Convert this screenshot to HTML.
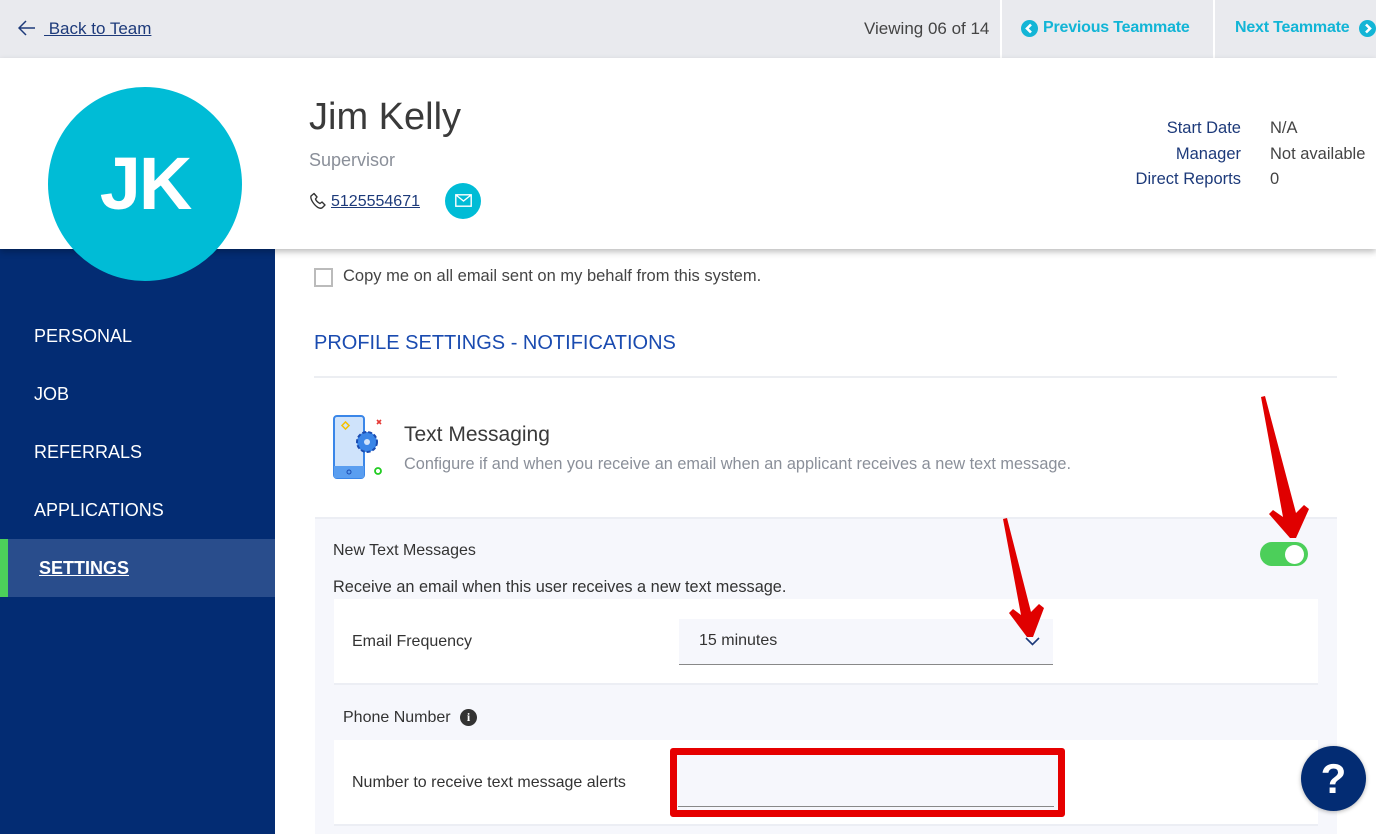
<!DOCTYPE html>
<html><head><meta charset="utf-8"><style>
*{margin:0;padding:0;box-sizing:border-box}
body{width:1376px;height:834px;overflow:hidden;position:relative;font-family:"Liberation Sans",sans-serif;background:#fff;color:#333}
.a{position:absolute;white-space:nowrap}
</style></head><body>
<div class="a" style="left:0;top:0;width:1376px;height:58px;background:#e9eaee"></div>
<div class="a" style="left:1000px;top:0;width:2px;height:58px;background:#fff"></div>
<div class="a" style="left:1213px;top:0;width:2px;height:58px;background:#fff"></div>
<svg class="a" style="left:18px;top:20px" width="18" height="16" viewBox="0 0 18 16"><path d="M8 1L1 8l7 7M1 8h16" fill="none" stroke="#1d3a7a" stroke-width="1.5"/></svg>
<div class="a" style="left:44px;top:19px;font-size:17px;color:#1d3a7a;text-decoration:underline">&nbsp;Back to Team</div>
<div class="a" style="left:864px;top:19px;font-size:17px;color:#444">Viewing 06 of 14</div>
<svg class="a" style="left:1021px;top:20px" width="17" height="17"><circle cx="8.5" cy="8.5" r="8.5" fill="#13b5d6"/><path d="M10 4.5L6 8.5l4 4" fill="none" stroke="#fff" stroke-width="2.6"/></svg>
<div class="a" style="left:1043px;top:19px;font-size:16px;color:#13b5d6;font-weight:bold;letter-spacing:-0.2px">Previous Teammate</div>
<div class="a" style="left:1235px;top:19px;font-size:16px;color:#13b5d6;font-weight:bold;letter-spacing:-0.2px">Next Teammate</div>
<svg class="a" style="left:1359px;top:20px" width="17" height="17"><circle cx="8.5" cy="8.5" r="8.5" fill="#13b5d6"/><path d="M7 4.5l4 4-4 4" fill="none" stroke="#fff" stroke-width="2.6"/></svg>
<div class="a" style="left:0;top:249px;width:275px;height:585px;background:#032c73"></div>
<div class="a" style="left:0;top:539px;width:275px;height:58px;background:#294d8c"></div>
<div class="a" style="left:0;top:539px;width:8px;height:58px;background:#4ccf5a"></div>
<div class="a" style="left:34px;top:326px;font-size:18px;color:#fff">PERSONAL</div>
<div class="a" style="left:34px;top:384px;font-size:18px;color:#fff">JOB</div>
<div class="a" style="left:34px;top:442px;font-size:18px;color:#fff">REFERRALS</div>
<div class="a" style="left:34px;top:500px;font-size:18px;color:#fff">APPLICATIONS</div>
<div class="a" style="left:39px;top:558px;font-size:18px;color:#fff;font-weight:bold;text-decoration:underline">SETTINGS</div>
<div class="a" style="left:0;top:58px;width:1376px;height:191px;background:#fff;box-shadow:0 3px 6px rgba(0,0,0,.25)"></div>
<div class="a" style="left:48px;top:87px;width:194px;height:194px;border-radius:50%;background:#00bcd6;color:#fff;font-size:74px;font-weight:bold;text-align:center;line-height:194px;letter-spacing:-2px">JK</div>
<div class="a" style="left:309px;top:96px;font-size:38px;color:#3a3a3a">Jim Kelly</div>
<div class="a" style="left:309px;top:150px;font-size:18px;color:#8a8f99">Supervisor</div>
<svg class="a" style="left:309px;top:192px" width="18" height="18" viewBox="0 0 18 18"><path d="M5 1.5L2 4c-1 3 3 9 7 11.5 2 1 3.5 1 4.5 0l2.5-2.5-3-3-2 1.5C9 10.5 7 8.5 6.5 7L8 5z" fill="none" stroke="#333" stroke-width="1.4" stroke-linejoin="round"/></svg>
<div class="a" style="left:331px;top:193px;font-size:16px;color:#1d3a7a;text-decoration:underline">5125554671</div>
<div class="a" style="left:445px;top:183px;width:36px;height:36px;border-radius:50%;background:#00bcd6"></div>
<svg class="a" style="left:455px;top:194px" width="17" height="13"><rect x="0.8" y="0.8" width="15.4" height="11.4" fill="none" stroke="#fff" stroke-width="1.4"/><path d="M1 1l7.5 6L16 1" fill="none" stroke="#fff" stroke-width="1.4"/></svg>
<div class="a" style="right:135px;top:116px;font-size:16.5px;color:#1d3a7a;text-align:right;line-height:25.5px">Start Date<br>Manager<br>Direct Reports</div>
<div class="a" style="left:1270px;top:116px;font-size:16.5px;color:#444;line-height:25.5px">N/A<br>Not available<br>0</div>
<div class="a" style="left:314px;top:268px;width:19px;height:19px;border:2px solid #bbb"></div>
<div class="a" style="left:343px;top:267px;font-size:16.5px;color:#444">Copy me on all email sent on my behalf from this system.</div>
<div class="a" style="left:314px;top:332px;font-size:20px;color:#1a4bb0">PROFILE SETTINGS - NOTIFICATIONS</div>
<div class="a" style="left:314px;top:376px;width:1023px;height:2px;background:#eceef2"></div>
<svg class="a" style="left:332px;top:414px" width="52" height="66" viewBox="0 0 52 66"><rect x="2" y="2" width="30" height="62" rx="3" fill="#cfe3fb" stroke="#3a86e8" stroke-width="2"/><rect x="2" y="52" width="30" height="12" fill="#5a9ef0"/><circle cx="17" cy="58" r="2" fill="none" stroke="#1a4bb0"/><circle cx="35" cy="28" r="10" fill="#3a86e8" stroke="#1a4bb0" stroke-width="2" stroke-dasharray="4 2"/><circle cx="35" cy="28" r="3" fill="#cfe3fb"/><rect x="11" y="9" width="5" height="5" fill="none" stroke="#f5c000" stroke-width="1.5" transform="rotate(45 13.5 11.5)"/><path d="M45 6l4 4M49 6l-4 4" stroke="#e53935" stroke-width="1.6"/><circle cx="46" cy="57" r="3" fill="none" stroke="#22cc22" stroke-width="1.8"/></svg>
<div class="a" style="left:404px;top:423px;font-size:21px;color:#3a3a3a">Text Messaging</div>
<div class="a" style="left:404px;top:455px;font-size:16.3px;color:#8a8f99">Configure if and when you receive an email when an applicant receives a new text message.</div>
<div class="a" style="left:315px;top:517px;width:1022px;height:317px;background:#f6f7fc;border-top:2px solid #eceef4"></div>
<div class="a" style="left:333px;top:542px;font-size:16px;color:#333">New Text Messages</div>
<div class="a" style="left:333px;top:578px;font-size:16.3px;color:#333">Receive an email when this user receives a new text message.</div>
<div class="a" style="left:1260px;top:542px;width:48px;height:24px;border-radius:12px;background:#4ccf5a"></div>
<div class="a" style="left:1285px;top:545px;width:19px;height:19px;border-radius:50%;background:#fff"></div>
<div class="a" style="left:334px;top:599px;width:984px;height:86px;background:#fff;border-bottom:2px solid #eceef4"></div>
<div class="a" style="left:352px;top:633px;font-size:16px;color:#333">Email Frequency</div>
<div class="a" style="left:679px;top:619px;width:374px;height:46px;background:#f6f7fc;border-bottom:1px solid #888"></div>
<div class="a" style="left:699px;top:632px;font-size:16px;color:#333">15 minutes</div>
<svg class="a" style="left:1025px;top:637px" width="15" height="9"><path d="M1 1l6.5 6.5L14 1" fill="none" stroke="#1d3a7a" stroke-width="1.6"/></svg>
<div class="a" style="left:343px;top:709px;font-size:16px;color:#333">Phone Number</div>
<div class="a" style="left:460px;top:709px;width:17px;height:17px;border-radius:50%;background:#333;color:#fff;font-size:12px;font-weight:bold;text-align:center;line-height:17px;font-family:'Liberation Serif',serif">i</div>
<div class="a" style="left:334px;top:740px;width:984px;height:86px;background:#fff;border-bottom:2px solid #eceef4"></div>
<div class="a" style="left:352px;top:774px;font-size:16px;color:#333">Number to receive text message alerts</div>
<div class="a" style="left:670px;top:748px;width:395px;height:69px;border:7px solid #e60000;border-radius:3px;background:#f6f7fc"></div>
<div class="a" style="left:678px;top:806px;width:376px;height:1px;background:#888"></div>
<svg class="a" style="left:0;top:0" width="1376" height="834"><g fill="#e00000"><path d="M1261 397l4-1 31 117 8-8 5 4-13 29-6 0-21-24 4-4 10 7z"/><path d="M1003 519l4-1 24 94 8-8 5 4-11 29-6 0-18-24 4-4 8 6z"/></g></svg>
<div class="a" style="left:1301px;top:746px;width:65px;height:65px;border-radius:50%;background:#032c73;color:#fff;font-size:42px;font-weight:bold;text-align:center;line-height:65px;box-shadow:0 1px 4px rgba(0,0,0,.3)">?</div>
</body></html>
